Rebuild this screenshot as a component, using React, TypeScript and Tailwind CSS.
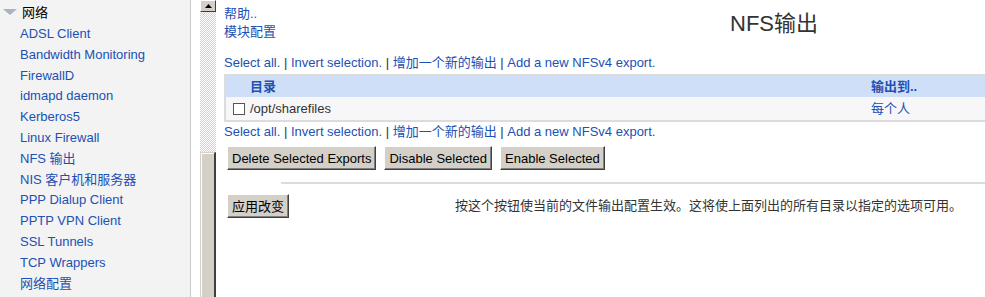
import React from 'react';

const font = { fontFamily: '"Liberation Sans", Arial, "Noto Sans CJK SC", sans-serif' };

const modules = [
  'ADSL Client',
  'Bandwidth Monitoring',
  'FirewallD',
  'idmapd daemon',
  'Kerberos5',
  'Linux Firewall',
  'NFS 输出',
  'NIS 客户机和服务器',
  'PPP Dialup Client',
  'PPTP VPN Client',
  'SSL Tunnels',
  'TCP Wrappers',
  '网络配置',
];

function ActionLinks() {
  return (
    <div className="h-[18px] leading-[18px] text-[13px] text-[#333]">
      <a className="text-[#2150b3]">Select all.</a> | <a className="text-[#2150b3]">Invert selection.</a> |{' '}
      <a className="text-[#2150b3]">增加一个新的输出</a> | <a className="text-[#2150b3]">Add a new NFSv4 export.</a>
    </div>
  );
}

function WinButton({ children }: { children: React.ReactNode }) {
  return (
    <button className="h-[24px] px-[4px] bg-[#d4d0c8] text-[13px] text-black leading-none border border-t-white border-l-white border-r-[#404040] border-b-[#404040] shadow-[inset_-1px_-1px_0_#808080]">
      {children}
    </button>
  );
}

export default function App() {
  return (
    <div className="flex h-[297px] w-[985px] overflow-hidden bg-white" style={font}>
      {/* left module menu */}
      <div className="w-[191px] shrink-0 bg-[#f3f3f3] border-r border-[#c9c9c9]">
        <div className="flex items-center h-[24px] pt-[1px]">
          <svg width="18" height="8" viewBox="0 0 18 8" className="ml-[3px]">
            <polygon points="0,0 14,0 7,6" fill="#a9b3c4" />
          </svg>
          <span className="text-[13px] text-black ml-[1px]">网络</span>
        </div>
        <div className="pl-[20px]">
          {modules.map((m) => (
            <div key={m} className="h-[20.8px] leading-[20.8px] text-[13px] text-[#2150b3] whitespace-nowrap">
              {m}
            </div>
          ))}
        </div>
      </div>

      {/* gap + scrollbar */}
      <div className="w-[9px] shrink-0 bg-white" />
      <div className="w-[16px] shrink-0 flex flex-col bg-[repeating-conic-gradient(#d4d0c8_0%_25%,#ffffff_0%_50%)] bg-[length:2px_2px]">
        <div className="h-[12px] bg-[#d4d0c8] border border-t-white border-l-white border-r-[#404040] border-b-[#404040] flex items-center justify-center">
          <svg width="7" height="4" viewBox="0 0 7 4">
            <polygon points="0,4 7,4 3.5,0" fill="#000" />
          </svg>
        </div>
        <div className="h-[140px]" />
        <div className="flex-1 bg-[#d4d0c8] border-t border-l border-t-[#d4d0c8] border-l-[#d4d0c8] border-r-2 border-r-[#404040] shadow-[inset_1px_1px_0_#ffffff]" />
      </div>

      {/* main content */}
      <div className="flex-1 pl-[8px] min-w-0">
        <div className="flex pt-[5px]">
          <div className="w-[506px] shrink-0 text-[13px] text-[#2150b3]">
            <div className="h-[18px] leading-[18px]">帮助..</div>
            <div className="h-[18px] leading-[18px]">模块配置</div>
          </div>
          <div className="text-[22px] text-[#333] leading-[26px] pt-[6px]">NFS输出</div>
        </div>

        <div className="mt-[13px]">
          <ActionLinks />
        </div>

        <div className="mt-[2px] border-2 border-r-0 border-[#dcdcdc] text-[13px]">
          <div className="flex h-[21px] items-center bg-[#cfdff8] font-bold text-[#2150b3]">
            <div className="w-[24px] shrink-0" />
            <div className="w-[621px] shrink-0">目录</div>
            <div>输出到..</div>
          </div>
          <div className="flex h-[23px] items-center bg-[#f7f7f9]">
            <div className="w-[24px] shrink-0 flex justify-center">
              <div className="w-[12px] h-[12px] border border-[#555] bg-white ml-[2px]" />
            </div>
            <div className="w-[621px] shrink-0 text-[#333]">/opt/sharefiles</div>
            <div className="text-[#2150b3]">每个人</div>
          </div>
        </div>

        <div className="mt-[1px]">
          <ActionLinks />
        </div>

        <div className="flex gap-[8px] mt-[5px] pl-[3px]">
          <WinButton>Delete Selected Exports</WinButton>
          <WinButton>Disable Selected</WinButton>
          <WinButton>Enable Selected</WinButton>
        </div>

        <div className="mt-[12px] ml-[57px] h-[2px] bg-[#dcdcdc]" />

        <div className="flex items-center mt-[10px] pl-[3px]">
          <WinButton>应用改变</WinButton>
          <div className="ml-[166px] text-[13px] text-[#333]">
            按这个按钮使当前的文件输出配置生效。这将使上面列出的所有目录以指定的选项可用。
          </div>
        </div>
      </div>
    </div>
  );
}
